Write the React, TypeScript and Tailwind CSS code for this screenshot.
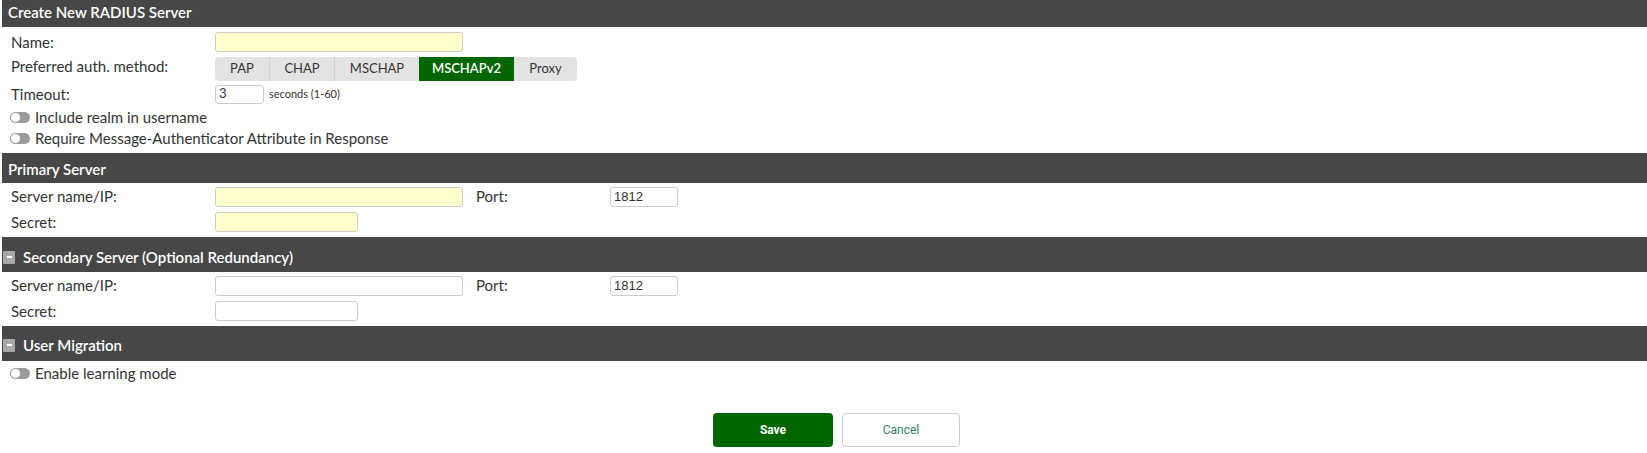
import React from "react";

const lato = "font-['Lato','Noto_Sans',sans-serif]";

function Toggle() {
  return (
    <span className="relative inline-block w-[20px] h-[11px] rounded-full bg-[#9a9a9a] mr-[5px]">
      <span className="absolute left-0 top-0 w-[11px] h-[11px] rounded-full bg-white border border-[#9a9a9a]" />
    </span>
  );
}

function MinusBox() {
  return (
    <span className="flex items-center justify-center w-[12px] h-[13px] rounded-[1px] bg-[#a9a9a9] mr-[8px]">
      <span className="block w-[5px] h-[2px] bg-white" />
    </span>
  );
}

function Header({ title, h, collapsible }: { title: string; h: string; collapsible?: boolean }) {
  return (
    <div className={`ml-[2px] flex items-center bg-[#474747] text-white text-[15px] font-semibold ${h} ${collapsible ? "pl-[1px] pt-[2px]" : "pl-[6px]"}`}>
      {collapsible && <MinusBox />}
      <span>{title}</span>
    </div>
  );
}

function TextInput({ w, yellow, value }: { w: string; yellow?: boolean; value?: string }) {
  return (
    <div
      className={`${w} h-[20px] border border-[#cccccc] rounded-[3px] px-[3px] flex items-center text-[13px] font-['Liberation_Sans',sans-serif] text-[#333] ${
        yellow ? "bg-[#ffffcc]" : "bg-white"
      }`}
    >
      {value}
    </div>
  );
}

function Row({ h, label, children }: { h: string; label: string; children?: React.ReactNode }) {
  return (
    <div className={`flex items-center ${h}`}>
      <div className="w-[215px] pl-[11px] text-[15px] text-[#333]">{label}</div>
      {children}
    </div>
  );
}

function ServerRows({ yellow }: { yellow: boolean }) {
  return (
    <>
      <div className="flex items-center h-[27px]">
        <div className="w-[215px] pl-[11px] text-[15px] text-[#333]">Server name/IP:</div>
        <TextInput w="w-[248px]" yellow={yellow} />
        <div className="w-[147px] pl-[13px] text-[15px] text-[#333]">Port:</div>
        <TextInput w="w-[68px]" value="1812" />
      </div>
      <Row h="h-[24px]" label="Secret:">
        <TextInput w="w-[143px]" yellow={yellow} />
      </Row>
    </>
  );
}

export default function App() {
  const methods = ["PAP", "CHAP", "MSCHAP", "MSCHAPv2", "Proxy"];
  const widths = ["w-[54px]", "w-[65px]", "w-[85px]", "w-[95px]", "w-[63px]"];
  return (
    <div className={`w-[1647px] h-[453px] bg-white ${lato}`}>
      <Header title="Create New RADIUS Server" h="h-[27px] pb-[2px]" />
      <div className="pb-[4px]">
        <Row h="h-[30px]" label="Name:">
          <TextInput w="w-[248px]" yellow />
        </Row>
        <div className="flex items-start h-[24px]">
          <div className="w-[215px] pl-[11px] text-[15px] text-[#333] leading-[18px]">Preferred auth. method:</div>
          <div className="flex h-[24px] rounded-[4px] overflow-hidden bg-[#e3e3e3] text-[13px]">
            {methods.map((m, i) => (
              <div
                key={m}
                className={`${widths[i]} flex items-center justify-center ${
                  m === "MSCHAPv2" ? "bg-[#006600] text-white font-semibold" : "text-[#333]"
                } ${i > 0 && m !== "MSCHAPv2" && methods[i - 1] !== "MSCHAPv2" ? "border-l border-[#d0d0d0]" : ""}`}
              >
                {m}
              </div>
            ))}
          </div>
        </div>
        <Row h="h-[26px]" label="Timeout:">
          <div className="w-[49px] h-[19px] border border-[#cccccc] rounded-[3px] bg-white pl-[3px] flex items-center text-[13px] text-[#333]">
            3
          </div>
          <span className="ml-[5px] text-[11px] text-[#333]">seconds (1-60)</span>
        </Row>
        <div className="flex items-center h-[21px] pl-[10px] text-[15px] text-[#333]">
          <Toggle />
          Include realm in username
        </div>
        <div className="flex items-center h-[21px] pl-[10px] text-[15px] text-[#333]">
          <Toggle />
          Require Message-Authenticator Attribute in Response
        </div>
      </div>

      <Header title="Primary Server" h="h-[30px] pt-[2px]" />
      <div className="pb-[3px]">
        <ServerRows yellow />
      </div>

      <Header title="Secondary Server (Optional Redundancy)" h="h-[35px] pt-[5px]" collapsible />
      <div className="pb-[3px]">
        <ServerRows yellow={false} />
      </div>

      <Header title="User Migration" h="h-[35px] pt-[3px]" collapsible />
      <div className="flex items-center h-[24px] pl-[10px] text-[15px] text-[#333]">
        <Toggle />
        Enable learning mode
      </div>

      <div className="flex justify-center gap-[9px] mt-[28px] pl-[26px] font-['Roboto',sans-serif] text-[12px]">
        <button className="w-[120px] h-[34px] rounded-[4px] bg-[#006600] text-white font-bold">Save</button>
        <button className="w-[118px] h-[34px] rounded-[4px] bg-white border border-[#cccccc] text-[#2f7f70]">Cancel</button>
      </div>
    </div>
  );
}
